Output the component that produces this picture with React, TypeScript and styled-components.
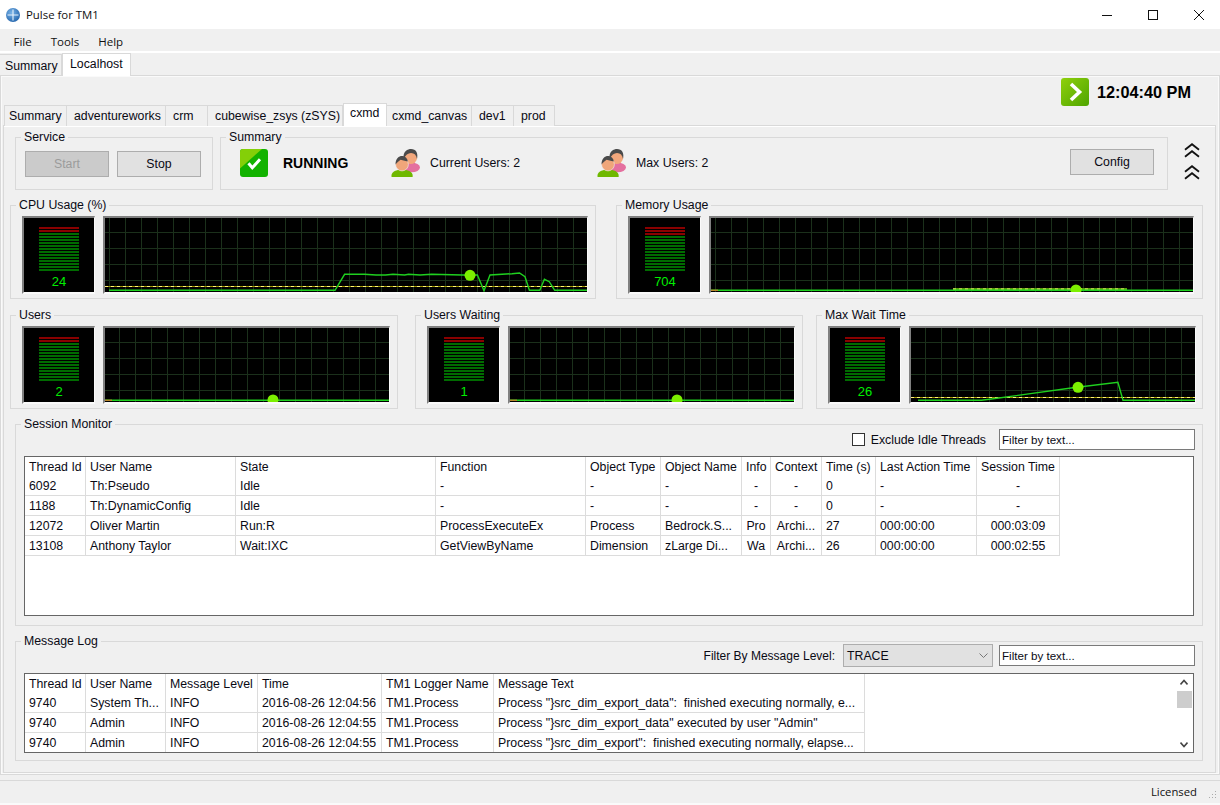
import React from "react";
import styled, { createGlobalStyle } from "styled-components";

const Global = createGlobalStyle`
  html, body { margin: 0; padding: 0; background: #f0f0f0; }
  * { box-sizing: border-box; }
  body { font-family: "Liberation Sans", Arial, sans-serif; font-size: 12.3px; color: #0a0a14; }
`;

const Page = styled.div`
  width: 1220px; height: 805px; overflow: hidden; background: #f0f0f0;
  display: flex; flex-direction: column;
`;
const TitleBar = styled.div`
  height: 29px; background: #fff; display: flex; align-items: center; padding-left: 6px;
  font-family: "Open Sans", sans-serif; font-size: 11.4px; color: #111;
`;
const AppName = styled.span` margin-left: 6px; `;
const WinControls = styled.div` margin: 0 -2px 0 auto; display: flex; height: 100%; `;
const WinButton = styled.div`
  width: 46px; display: flex; align-items: center; justify-content: center;
`;
const MenuBar = styled.div`
  height: 24px; padding: 2px 0 0 4px; display: flex; align-items: center;
  border-bottom: 2px solid #fff;
  font-family: "Open Sans", sans-serif; font-size: 11.5px; color: #111;
`;
const MenuItem = styled.span` padding: 0 9.5px; `;
const OuterTabs = styled.div` height: 22px; display: flex; align-items: flex-start; position: relative; z-index: 2; `;
const OuterTab = styled.div<{ $active?: boolean; $w: number }>`
  width: ${p => p.$w}px;
  height: ${p => (p.$active ? 23 : 21)}px;
  margin-top: ${p => (p.$active ? 0 : 1)}px;
  background: ${p => (p.$active ? "#fff" : "#f0f0f0")};
  border: 1px solid #d9d9d9; border-bottom: none;
  border-left: ${p => (p.$active ? "1px solid #d9d9d9" : "none")};
  padding-left: ${p => (p.$active ? 7 : 5)}px;
  line-height: ${p => (p.$active ? 21 : 22)}px;
`;
const OuterPanel = styled.div`
  height: 700px; border: 1px solid #d9d9d9; box-shadow: inset 0 0 0 1px #fafafa;
  display: flex; flex-direction: column;
`;
const ClockRow = styled.div`
  height: 27px; display: flex; justify-content: flex-end; align-items: flex-start;
  padding: 2px 28px 0 0; position: relative; z-index: 1;
`;
const ClockText = styled.span` font-size: 16.3px; font-weight: bold; margin-left: 8px; line-height: 29px; color: #000; `;
const TabStrip = styled.div`
  height: 23px; padding-left: 3px; display: flex; align-items: flex-start; position: relative; z-index: 2;
`;
const InnerTab = styled.div<{ $active?: boolean; $w: number; $first?: boolean; $pad: number }>`
  width: ${p => p.$w}px;
  height: ${p => (p.$active ? 23 : 21)}px;
  margin-top: ${p => (p.$active ? 0 : 2)}px;
  background: ${p => (p.$active ? "#fff" : "#f0f0f0")};
  border: 1px solid #d9d9d9; border-bottom: none;
  border-left: ${p => (p.$active || p.$first ? "1px solid #d9d9d9" : "none")};
  padding-left: ${p => p.$pad}px;
  line-height: ${p => (p.$active ? 18 : 20)}px;
  white-space: nowrap;
`;
const TabPanel = styled.div`
  flex: 1; margin: -1px 3px 1px 2px; padding-top: 8px;
  border: 1px solid #d9d9d9; box-shadow: inset 0 1px 0 #fff;
  display: flex; flex-direction: column;
`;
const Row = styled.div<{ $h: number; $pad: number; $after?: number }>`
  height: ${p => p.$h}px; padding-left: ${p => p.$pad}px;
  margin-bottom: ${p => p.$after ?? 0}px;
  display: flex; flex: none;
`;
const Group = styled.fieldset<{ $w: number; $x?: number }>`
  width: ${p => p.$w}px; height: 100%; margin: 0 0 0 ${p => p.$x ?? 0}px; padding: 0; flex: none; min-width: 0;
  border: 1px solid #d9d9d9;
`;
const Legend = styled.legend`
  height: 6px; line-height: 7px; padding: 0 3px; margin-left: 5px; white-space: nowrap;
`;
const ServiceBody = styled.div` display: flex; gap: 8px; padding: 11px 0 0 9px; `;
const Btn = styled.div<{ $disabled?: boolean }>`
  width: 84px; height: 26px; display: flex; align-items: center; justify-content: center;
  background: ${p => (p.$disabled ? "#cbcbcb" : "#e1e1e1")};
  border: 1px solid #adadad;
  color: ${p => (p.$disabled ? "#9b9b9b" : "#0a0a14")};
`;
const SummaryBody = styled.div` height: 100%; display: flex; align-items: flex-start; padding: 9px 13px 0 19px; `;
const Running = styled.span` width: 108px; margin-left: 15px; font-size: 14px; font-weight: bold; line-height: 28px; color: #000; `;
const UserStat = styled.div<{ $w: number }>`
  width: ${p => p.$w}px; display: flex; align-items: flex-start; gap: 10px; line-height: 28px;
`;
const ConfigBtn = styled(Btn)` margin-left: auto; `;
const Collapse = styled.div`
  margin-left: 16px; padding-top: 9px; width: 16px; display: flex; flex-direction: column; gap: 7px;
`;
const ChartBody = styled.div` display: flex; gap: 8px; padding: 8px 0 0 11px; `;
const GaugeBox = styled.div`
  width: 73px; height: 78px; background: #000; flex: none;
  border-style: solid; border-width: 2px 1px 2px 2px;
  border-color: #808080 #fafafa #fafafa #808080;
  display: flex; flex-direction: column; align-items: center;
`;
const GaugeBars = styled.svg` margin-top: 9px; display: block; flex: none; `;
const GaugeValue = styled.div`
  margin-top: 2px; font-size: 13px; line-height: 15px; color: #00ee00;
`;
const ChartBox = styled.div<{ $w: number }>`
  width: ${p => p.$w}px; height: 78px; background: #000; flex: none;
  border-style: solid; border-width: 2px 1px 2px 2px;
  border-color: #808080 #fafafa #fafafa #808080;
`;
const Plot = styled.svg` display: block; width: 100%; height: 100%; `;
const ListBody = styled.div` padding: 2px 7px 0 8px; `;
const LogBody = styled.div` padding: 0 7px 0 8px; `;
const Toolbar = styled.div<{ $h: number }>`
  height: ${p => p.$h}px; display: flex; align-items: center; justify-content: flex-end;
`;
const Check = styled.input`
  appearance: none; width: 13px; height: 13px; margin: 0 6px 0 0; background: #fff; border: 1px solid #333;
`;
const CheckLabel = styled.span` margin-right: 13px; `;
const LevelLabel = styled.span` margin-right: 8px; font-size: 12px; `;
const FilterInput = styled.input`
  width: 196px; height: 21px; padding: 0 2px; border: 1px solid #7a7a7a; background: #fff;
  font: 11.6px "Liberation Sans", Arial, sans-serif; color: #0a0a14; outline: none;
`;
const Select = styled.div`
  width: 150px; height: 23px; margin-right: 6px; padding: 0 4px 0 3px; background: #e1e1e1; border: 1px solid #adadad;
  display: flex; align-items: center; justify-content: space-between;
`;
const TableFrame = styled.div<{ $h: number }>`
  width: 1170px; height: ${p => p.$h}px; margin-top: 6px; border: 1px solid #666; background: #fff;
  display: flex; overflow: hidden;
`;
const TableArea = styled.div` flex: 1; min-width: 0; `;
const Grid = styled.table`
  border-collapse: separate; border-spacing: 0; table-layout: fixed;
`;
const Th = styled.th`
  height: 19px; padding: 0 0 0 4px; font-weight: normal; text-align: left; white-space: nowrap;
  border-right: 1px solid #dcdcdc; overflow: hidden;
`;
const Td = styled.td<{ $center?: boolean }>`
  height: 20px; padding: ${p => (p.$center ? "0" : "0 0 0 4px")}; white-space: pre; overflow: hidden;
  text-align: ${p => (p.$center ? "center" : "left")};
  border-right: 1px solid #dcdcdc; border-bottom: 1px solid #dcdcdc;
`;
const ScrollBar = styled.div`
  width: 16px; margin-right: 1px; flex: none; display: flex; flex-direction: column; align-items: center;
`;
const ScrollArrow = styled.svg` flex: none; display: block; margin: 5px 0 4px; `;
const Thumb = styled.div` width: 15px; height: 17px; margin-top: 1px; background: #cdcdcd; `;
const Track = styled.div` flex: 1; `;
const StatusBar = styled.div`
  height: 25px; margin-top: 5px; padding: 0 3px 2px 0; border-top: 1px solid #d9d9d9; border-bottom: 2px solid #fafafa;
  display: flex; align-items: center; justify-content: flex-end;
  font-family: "Open Sans", sans-serif; font-size: 11.3px; color: #111;
`;
const Grip = styled.svg` margin: 6px 0 0 11px; display: block; `;

const Globe = () => (
  <svg width="14" height="14" viewBox="0 0 14 14">
    <defs>
      <radialGradient id="gb" cx="40%" cy="35%" r="75%">
        <stop offset="0" stopColor="#7ab4e8" />
        <stop offset="1" stopColor="#1d5fa8" />
      </radialGradient>
    </defs>
    <circle cx="7" cy="7" r="7" fill="url(#gb)" />
    <path d="M7 1.5 V12.5 M1.5 7 H12.5" stroke="#e8f2fb" strokeWidth="1.1" />
  </svg>
);

const ArrowBadge = () => (
  <svg width="28" height="28" viewBox="0 0 28 28">
    <defs>
      <linearGradient id="ab" x1="0" y1="0" x2="1" y2="1">
        <stop offset="0" stopColor="#8fd00c" />
        <stop offset="1" stopColor="#4ea400" />
      </linearGradient>
    </defs>
    <rect width="28" height="28" rx="3" fill="url(#ab)" />
    <path d="M10 6 L18.5 14 L10 22" fill="none" stroke="#fff" strokeWidth="3.6" />
  </svg>
);

const CheckBadge = () => (
  <svg width="28" height="28" viewBox="0 0 28 28">
    <rect width="28" height="28" rx="3" fill="#12b200" />
    <path d="M3 0 H22 L0 19.5 V3 A3 3 0 0 1 3 0Z" fill="#84cf08" />
    <path d="M8.5 14.3 L12.3 18.8 L20 10.3" fill="none" stroke="#fff" strokeWidth="3" />
  </svg>
);

const UsersIcon = () => (
  <svg width="29" height="28" viewBox="0 0 29 28">
    <ellipse cx="20.5" cy="18.5" rx="8.5" ry="4.8" fill="#e4709f" />
    <circle cx="19.5" cy="8.5" r="6.6" fill="#f2a77c" />
    <path d="M12.6 10 C11.6 2 17 0 20 0 C25 0 27.4 4 26 10 C25.4 6 23.5 4 20 4 C17 4 14.5 6 12.6 10Z" fill="#4a4a4a" />
    <path d="M0.6 28 C-0.4 23 5 20.5 11 20.5 C17 20.5 22.6 23 21.6 28Z" fill="#6fb800" />
    <circle cx="11" cy="15.5" r="6.4" fill="#f0a67a" stroke="#f0f0f0" strokeWidth="0.6" />
    <path d="M4.6 15.5 C4.2 9.5 8.2 7 11 7 C14 7 16.6 9.4 16.8 12.6 C14 12.2 10.5 10.8 9.5 10.8 C8 12 6.2 13.5 4.6 15.5Z" fill="#4a4a4a" />
  </svg>
);

const DoubleUp = () => (
  <svg width="16" height="15" viewBox="0 0 16 15">
    <path d="M1 6.8 L8 1.2 L15 6.8 M1 13.8 L8 8.2 L15 13.8" fill="none" stroke="#111" strokeWidth="1.8" />
  </svg>
);

type PlotSpec = {
  w: number; off: number;
  line: [number, number][];
  dot: [number, number];
  yellow?: { y: number; from: number; to: number };
  thick?: [number, number];
  orange?: boolean;
};

const Chart = ({ w, off, line, dot, yellow, thick, orange }: PlotSpec) => {
  const xs: number[] = [];
  for (let x = off; x < w; x += 16) xs.push(x);
  const pts = line.map(p => p.join(",")).join(" ");
  return (
    <ChartBox $w={w}>
      <Plot viewBox={`2 1 ${w - 3} 74`} preserveAspectRatio="none">
        {xs.map(x => (
          <line key={x} x1={x + 0.5} x2={x + 0.5} y1="0" y2="77" stroke="#1b301b" />
        ))}
        {[15, 31, 47, 63].map(y => (
          <line key={y} x1="0" x2={w} y1={y + 0.5} y2={y + 0.5} stroke="#1b301b" />
        ))}
        {thick && <line x1={thick[0]} x2={thick[1]} y1="72.4" y2="72.4" stroke="#22dd22" strokeWidth="2.4" />}
        {yellow && <line x1={yellow.from} x2={yellow.to} y1={yellow.y} y2={yellow.y} stroke="#9c9400" strokeWidth="1" />}
        {yellow && <line x1={yellow.from} x2={yellow.to} y1={yellow.y} y2={yellow.y} stroke="#fff27a" strokeWidth="1" strokeDasharray="3 3" />}
        <polyline points={pts} fill="none" stroke="#1fd01f" strokeWidth="1.4" />
        {orange && <line x1="2" x2="9" y1="73.3" y2="73.3" stroke="#b8862a" strokeWidth="1.4" />}
        <circle cx={dot[0]} cy={dot[1]} r="5.5" fill="#7cf000" />
      </Plot>
    </ChartBox>
  );
};

const Gauge = ({ value, red = 2 }: { value: string; red?: number }) => (
  <GaugeBox>
    <GaugeBars width="40" height="45" viewBox="0 0 40 45" shapeRendering="crispEdges">
      {Array.from({ length: 15 }, (_, i) => (
        <rect key={i} x="0" y={i * 3} width="40" height="2" fill={i < red ? "#8a0000" : "#006b00"} />
      ))}
    </GaugeBars>
    <GaugeValue>{value}</GaugeValue>
  </GaugeBox>
);

const cpuLine: [number, number][] = [
  [6, 73.3], [232, 73.3], [241.6, 57.3], [261.5, 57.3], [273, 58], [282.5, 58], [290, 57.3], [301.7, 58],
  [305.5, 57.3], [317, 58], [328.5, 57.3], [359, 58], [374.4, 58], [381, 73.8], [387, 58], [409, 56.7],
  [416.5, 56], [422, 59.7], [426.4, 73.3], [436.8, 73.3], [441.4, 62.3], [446.3, 64.7], [451.7, 73.3], [484, 73.3],
];

const sessionCols = [61, 150, 200, 150, 75, 81, 29, 51, 54, 101, 83];
const sessionHead = ["Thread Id", "User Name", "State", "Function", "Object Type", "Object Name", "Info", "Context", "Time (s)", "Last Action Time", "Session Time"];
const centered = new Set([6, 7, 10]);
const sessionRows = [
  ["6092", "Th:Pseudo", "Idle", "-", "-", "-", "-", "-", "0", "-", "-"],
  ["1188", "Th:DynamicConfig", "Idle", "-", "-", "-", "-", "-", "0", "-", "-"],
  ["12072", "Oliver Martin", "Run:R", "ProcessExecuteEx", "Process", "Bedrock.S...", "Pro", "Archi...", "27", "000:00:00", "000:03:09"],
  ["13108", "Anthony Taylor", "Wait:IXC", "GetViewByName", "Dimension", "zLarge Di...", "Wa", "Archi...", "26", "000:00:00", "000:02:55"],
];
const logCols = [61, 80, 92, 124, 112, 371];
const logHead = ["Thread Id", "User Name", "Message Level", "Time", "TM1 Logger Name", "Message Text"];
const logRows = [
  ["9740", "System Th...", "INFO", "2016-08-26 12:04:56", "TM1.Process", 'Process "}src_dim_export_data":  finished executing normally, e...'],
  ["9740", "Admin", "INFO", "2016-08-26 12:04:55", "TM1.Process", 'Process "}src_dim_export_data" executed by user "Admin"'],
  ["9740", "Admin", "INFO", "2016-08-26 12:04:55", "TM1.Process", 'Process "}src_dim_export":  finished executing normally, elapse...'],
];

const DataTable = ({ cols, head, rows, center }: { cols: number[]; head: string[]; rows: string[][]; center?: Set<number> }) => (
  <Grid width={cols.reduce((a, b) => a + b, 0)}>
    <colgroup>
      {cols.map((c, i) => <col key={i} width={c} />)}
    </colgroup>
    <thead>
      <tr>{head.map(h => <Th key={h}>{h}</Th>)}</tr>
    </thead>
    <tbody>
      {rows.map((r, i) => (
        <tr key={i}>
          {r.map((c, j) => <Td key={j} $center={center?.has(j)}>{c}</Td>)}
        </tr>
      ))}
    </tbody>
  </Grid>
);

const outerTabs = [{ t: "Summary", w: 62 }, { t: "Localhost", w: 69, a: true }];
const innerTabs = [
  { t: "Summary", w: 63, f: true, pad: 4 }, { t: "adventureworks", w: 99, pad: 7 }, { t: "crm", w: 42, pad: 7 },
  { t: "cubewise_zsys (zSYS)", w: 135, pad: 7 }, { t: "cxmd", w: 44, a: true, pad: 6 }, { t: "cxmd_canvas", w: 85, pad: 5 },
  { t: "dev1", w: 42, pad: 7 }, { t: "prod", w: 41, pad: 7 },
];

export default function App() {
  return (
    <Page>
      <Global />
      <TitleBar>
        <Globe />
        <AppName>Pulse for TM1</AppName>
        <WinControls>
          <WinButton>
            <svg width="10" height="10" viewBox="0 0 10 10"><path d="M0 5.5 H10" stroke="#111" strokeWidth="1" /></svg>
          </WinButton>
          <WinButton>
            <svg width="10" height="10" viewBox="0 0 10 10"><rect x="0.5" y="0.5" width="9" height="9" fill="none" stroke="#111" /></svg>
          </WinButton>
          <WinButton>
            <svg width="10" height="10" viewBox="0 0 10 10"><path d="M0 0 L10 10 M10 0 L0 10" stroke="#111" strokeWidth="1" /></svg>
          </WinButton>
        </WinControls>
      </TitleBar>
      <MenuBar>
        <MenuItem>File</MenuItem>
        <MenuItem>Tools</MenuItem>
        <MenuItem>Help</MenuItem>
      </MenuBar>
      <OuterTabs>
        {outerTabs.map(t => <OuterTab key={t.t} $w={t.w} $active={t.a}>{t.t}</OuterTab>)}
      </OuterTabs>
      <OuterPanel>
        <ClockRow>
          <ArrowBadge />
          <ClockText>12:04:40 PM</ClockText>
        </ClockRow>
        <TabStrip>
          {innerTabs.map(t => <InnerTab key={t.t} $w={t.w} $active={t.a} $first={t.f} $pad={t.pad}>{t.t}</InnerTab>)}
        </TabStrip>
        <TabPanel>
          <Row $h={56} $pad={11} $after={12}>
            <Group $w={198}>
              <Legend>Service</Legend>
              <ServiceBody>
                <Btn $disabled>Start</Btn>
                <Btn>Stop</Btn>
              </ServiceBody>
            </Group>
            <Group $w={948} $x={7}>
              <Legend>Summary</Legend>
              <SummaryBody>
                <CheckBadge />
                <Running>RUNNING</Running>
                <UserStat $w={206}><UsersIcon /><span>Current Users: 2</span></UserStat>
                <UserStat $w={200}><UsersIcon /><span>Max Users: 2</span></UserStat>
                <ConfigBtn>Config</ConfigBtn>
              </SummaryBody>
            </Group>
            <Collapse>
              <DoubleUp />
              <DoubleUp />
            </Collapse>
          </Row>
          <Row $h={97} $pad={6} $after={13}>
            <Group $w={586}>
              <Legend>CPU Usage (%)</Legend>
              <ChartBody>
                <Gauge value="24" />
                <Chart w={485} off={6} line={cpuLine} dot={[367, 58.3]} yellow={{ y: 69.5, from: 2, to: 484 }} />
              </ChartBody>
            </Group>
            <Group $w={587} $x={20}>
              <Legend>Memory Usage</Legend>
              <ChartBody>
                <Gauge value="704" red={3} />
                <Chart w={485} off={6} line={[[2, 73.3], [485, 73.3]]} dot={[367, 73]} thick={[244, 418]} yellow={{ y: 72, from: 244, to: 418 }} orange />
              </ChartBody>
            </Group>
          </Row>
          <Row $h={97} $pad={6} $after={12}>
            <Group $w={388}>
              <Legend>Users</Legend>
              <ChartBody>
                <Gauge value="2" />
                <Chart w={287} off={16} line={[[2, 73.3], [287, 73.3]]} dot={[170, 73]} orange />
              </ChartBody>
            </Group>
            <Group $w={388} $x={17}>
              <Legend>Users Waiting</Legend>
              <ChartBody>
                <Gauge value="1" />
                <Chart w={287} off={16} line={[[2, 73.3], [287, 73.3]]} dot={[169, 73]} orange />
              </ChartBody>
            </Group>
            <Group $w={387} $x={13}>
              <Legend>Max Wait Time</Legend>
              <ChartBody>
                <Gauge value="26" />
                <Chart
                  w={287} off={16}
                  line={[[9, 73.3], [72.4, 73.3], [80.7, 72.3], [164, 60.7], [208.9, 55.3], [214, 73.3], [287, 73.3]]}
                  dot={[169, 60.3]}
                  yellow={{ y: 70.5, from: 2, to: 287 }}
                />
              </ChartBody>
            </Group>
          </Row>
          <Row $h={205} $pad={11} $after={12}>
            <Group $w={1188}>
              <Legend>Session Monitor</Legend>
              <ListBody>
                <Toolbar $h={21}>
                  <Check type="checkbox" readOnly />
                  <CheckLabel>Exclude Idle Threads</CheckLabel>
                  <FilterInput readOnly value="Filter by text..." />
                </Toolbar>
                <TableFrame $h={160}>
                  <TableArea>
                    <DataTable cols={sessionCols} head={sessionHead} rows={sessionRows} center={centered} />
                  </TableArea>
                </TableFrame>
              </ListBody>
            </Group>
          </Row>
          <Row $h={123} $pad={11}>
            <Group $w={1188}>
              <Legend>Message Log</Legend>
              <LogBody>
                <Toolbar $h={23}>
                  <LevelLabel>Filter By Message Level:</LevelLabel>
                  <Select>
                    <span>TRACE</span>
                    <svg width="9" height="5" viewBox="0 0 9 5"><path d="M0.5 0.5 L4.5 4.5 L8.5 0.5" fill="none" stroke="#777" /></svg>
                  </Select>
                  <FilterInput readOnly value="Filter by text..." />
                </Toolbar>
                <TableFrame $h={80}>
                  <TableArea>
                    <DataTable cols={logCols} head={logHead} rows={logRows} />
                  </TableArea>
                  <ScrollBar>
                    <ScrollArrow width="8" height="7" viewBox="0 0 8 7"><path d="M0.5 5.5 L4 1.5 L7.5 5.5" fill="none" stroke="#444" strokeWidth="1.6" /></ScrollArrow>
                    <Thumb />
                    <Track />
                    <ScrollArrow width="8" height="7" viewBox="0 0 8 7"><path d="M0.5 1.5 L4 5.5 L7.5 1.5" fill="none" stroke="#444" strokeWidth="1.6" /></ScrollArrow>
                  </ScrollBar>
                </TableFrame>
              </LogBody>
            </Group>
          </Row>
        </TabPanel>
      </OuterPanel>
      <StatusBar>
        <span>Licensed</span>
        <Grip width="9" height="9" viewBox="0 0 9 9">
          <path d="M7 1h1v1H7z M7 4h1v1H7z M4 4h1v1H4z M7 7h1v1H7z M4 7h1v1H4z M1 7h1v1H1z" fill="#aaa" />
        </Grip>
      </StatusBar>
    </Page>
  );
}
